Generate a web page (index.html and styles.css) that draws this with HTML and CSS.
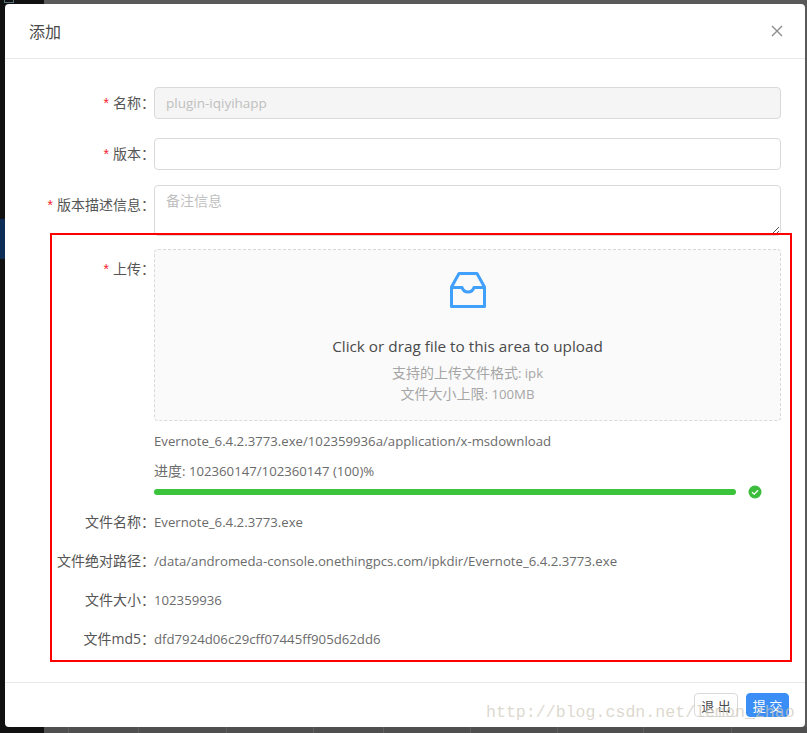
FILE: index.html
```html
<!DOCTYPE html>
<html lang="zh-CN">
<head>
<meta charset="utf-8">
<title>添加</title>
<link rel="stylesheet" href="styles.css">
</head>
<body>
<aside class="sidebar"><span class="sidebar-logo"></span><span class="sidebar-active"></span></aside>
<div class="backdrop-lines">
  <i style="left:68px"></i><i style="left:138px"></i><i style="left:226px"></i><i style="left:313px"></i><i style="left:383px"></i><i style="left:470px"></i><i style="left:557px"></i><i style="left:643px"></i><i style="left:731px"></i>
</div>
<section class="modal">
  <header class="modal-header">
    <h1 class="modal-title">添加</h1>
    <svg class="close" width="12" height="12" viewBox="0 0 12 12"><path d="M1 1l10 10M11 1L1 11" stroke="#8c8c8c" stroke-width="1.4" fill="none"/></svg>
  </header>
  <div class="modal-body">
    <div class="row row-name">
      <label class="label"><span class="req">*</span>名称：</label>
      <div class="input disabled">plugin-iqiyihapp</div>
    </div>
    <div class="row row-version">
      <label class="label"><span class="req">*</span>版本：</label>
      <div class="input"></div>
    </div>
    <div class="row row-desc">
      <label class="label"><span class="req">*</span>版本描述信息：</label>
      <div class="textarea">备注信息
        <svg class="grip" width="9" height="9" viewBox="0 0 9 9"><path d="M1 8l7-7M5 8l3-3" stroke="#555" stroke-width="1" fill="none"/></svg>
      </div>
    </div>
    <div class="row row-upload">
      <label class="label"><span class="req">*</span>上传：</label>
      <div class="upload-col">
        <div class="dropzone">
          <svg class="inbox" width="36" height="36" viewBox="0 0 36 36" fill="none" stroke="#40a0fb" stroke-width="3" stroke-linejoin="round"><path d="M1.500 15L9 1.500h18L34.500 15v19.500h-33z"/><path d="M1.500 15.500H12c1 3 3 4.500 6 4.500s5-1.500 6-4.500h10.500"/></svg>
          <p class="drop-title">Click or drag file to this area to upload</p>
          <p class="drop-hint"><span class="cjk">支持的上传文件格式</span>: ipk</p>
          <p class="drop-hint"><span class="cjk">文件大小上限</span>: 100MB</p>
        </div>
        <p class="file-line first">Evernote_6.4.2.3773.exe/102359936a/application/x-msdownload</p>
        <p class="file-line second"><span class="cjk">进度</span>: 102360147/102360147 (100)%</p>
        <div class="progress">
          <div class="track"><div class="bar" style="width:100%"></div></div>
          <svg class="done" width="14" height="14" viewBox="0 0 14 14"><circle cx="7" cy="7" r="6.500" fill="#3dbd3d"/><path d="M4 7.200l2.200 2L10 5.200" stroke="#fff" stroke-width="1.300" fill="none"/></svg>
        </div>
      </div>
    </div>
    <div class="row row-info first-info"><span class="label">文件名称：</span><span class="value">Evernote_6.4.2.3773.exe</span></div>
    <div class="row row-info"><span class="label">文件绝对路径：</span><span class="value">/data/andromeda-console.onethingpcs.com/ipkdir/Evernote_6.4.2.3773.exe</span></div>
    <div class="row row-info"><span class="label">文件大小：</span><span class="value">102359936</span></div>
    <div class="row row-info"><span class="label">文件md5：</span><span class="value">dfd7924d06c29cff07445ff905d62dd6</span></div>
  </div>
  <footer class="modal-footer">
    <button class="btn">退 出</button>
    <button class="btn primary">提 交</button>
  </footer>
  <div class="highlight"></div>
</section>
<div class="watermark">http://blog.csdn.net/lemon_zhao</div>
</body>
</html>
```
FILE: styles.css
```css
* { box-sizing: border-box; }
html, body { margin: 0; height: 100%; }
body {
  position: relative;
  width: 807px;
  height: 733px;
  overflow: hidden;
  background: #595959;
  font-family: "Open Sans", "Noto Sans CJK SC", sans-serif;
  font-size: 13.200px;
  color: #6b6b6b;
}
.cjk { font-size: 14px; }
.sidebar { position: absolute; left: 0; top: 0; width: 44px; height: 733px; background: #111; }
.sidebar-logo { position: absolute; left: 4px; top: -6px; width: 10px; height: 9px; border: 1px solid #56707a; }
.sidebar-active { position: absolute; left: 0; top: 219px; width: 5px; height: 40px; background: #0c2d55; }
.backdrop-lines { position: absolute; left: 44px; right: 0; top: 727px; height: 6px; background: #4f4f4f; }
.backdrop-lines i { position: absolute; top: 0; width: 1px; height: 6px; background: #5f5f5f; margin-left: -44px; }
.modal {
  position: absolute;
  left: 5px;
  top: 4px;
  width: 800px;
  height: 723px;
  background: #fff;
  border-radius: 4px;
  display: flex;
  flex-direction: column;
}
.modal-header {
  flex: none;
  height: 55px;
  padding: 0 22px 1px 24px;
  border-bottom: 1px solid #e8e8e8;
  display: flex;
  align-items: center;
  justify-content: space-between;
}
.modal-title { margin: 0; font-size: 16px; font-weight: 400; color: #4a4a4a; }
.modal-body { flex: 1; padding-top: 28px; }
.row { display: flex; align-items: flex-start; }
.label {
  flex: none;
  width: 150px;
  text-align: right;
  color: #555;
  font-size: 14px;
  line-height: 32px;
  white-space: nowrap;
}
.req { color: #f5222d; margin-right: 4px; font-family: "Liberation Sans", sans-serif; }
.input {
  width: 627px;
  height: 32px;
  margin-left: -1px;
  border: 1px solid #d9d9d9;
  border-radius: 4px;
  padding: 0 11px;
  line-height: 30px;
}
.input.disabled { background: #f5f5f5; color: #bfbfbf; font-size: 13.500px; }
.row-version { margin-top: 19px; }
.row-desc { margin-top: 15px; }
.row-desc .label { line-height: 40px; }
.textarea {
  position: relative;
  width: 627px;
  height: 51px;
  margin-left: -1px;
  border: 1px solid #d9d9d9;
  border-radius: 4px;
  padding: 5px 11px;
  color: #bfbfbf;
  font-size: 14px;
  line-height: 20px;
}
.grip { position: absolute; right: 0; bottom: 0; }
.row-upload { margin-top: 13px; }
.row-upload .label { line-height: 40px; }
.upload-col { width: 627px; margin-left: -1px; }
.dropzone {
  height: 172px;
  padding-top: 22px;
  background: #fafafa;
  border: 1px dashed #d9d9d9;
  border-radius: 4px;
  text-align: center;
}
.inbox { display: block; margin: 0 auto; }
.drop-title { margin: 28px 0 0; font-size: 15.300px; line-height: 20px; color: #4a4a4a; }
.drop-hint { margin: 0; line-height: 20px; color: #a6a6a6; }
.drop-title + .drop-hint { margin-top: 7px; }
.drop-hint + .drop-hint { margin-top: 1px; }
.file-line { margin: 0; line-height: 20px; white-space: nowrap; }
.file-line.first { margin-top: 10px; }
.file-line.second { margin-top: 10px; }
.progress { display: flex; align-items: center; margin-top: 4px; height: 14px; }
.track { width: 582px; height: 6px; border-radius: 3px; background: #f5f5f5; }
.bar { height: 6px; border-radius: 3px; background: #3dc43d; }
.done { margin-left: 12px; }
.row-info { height: 39px; align-items: center; }
.row-info .label { line-height: 20px; }
.row-info .value { margin-left: -1px; white-space: nowrap; line-height: 20px; }
.first-info { margin-top: 3px; }
.modal-footer {
  flex: none;
  height: 45px;
  border-top: 1px solid #e8e8e8;
  display: flex;
  justify-content: flex-end;
  align-items: flex-start;
  gap: 8px;
  padding: 10px 16px 0 0;
}
.btn {
  width: 44px;
  height: 24px;
  padding: 0;
  border: 1px solid #d9d9d9;
  border-radius: 4px;
  background: #fff;
  color: #4a4a4a;
  font-family: inherit;
  font-size: 13px;
}
.btn.primary { width: 43px; background: #3a8ef5; border-color: #3a8ef5; color: #fff; }
.highlight {
  position: absolute;
  left: 45px;
  top: 229px;
  width: 742px;
  height: 429px;
  border: 2px solid #f00;
  pointer-events: none;
}
.watermark {
  position: absolute;
  left: 486px;
  top: 702px;
  font-family: "Liberation Mono", monospace;
  font-size: 16.600px;
  line-height: 22px;
  color: rgba(205, 200, 185, 0.7);
  white-space: nowrap;
}
```
